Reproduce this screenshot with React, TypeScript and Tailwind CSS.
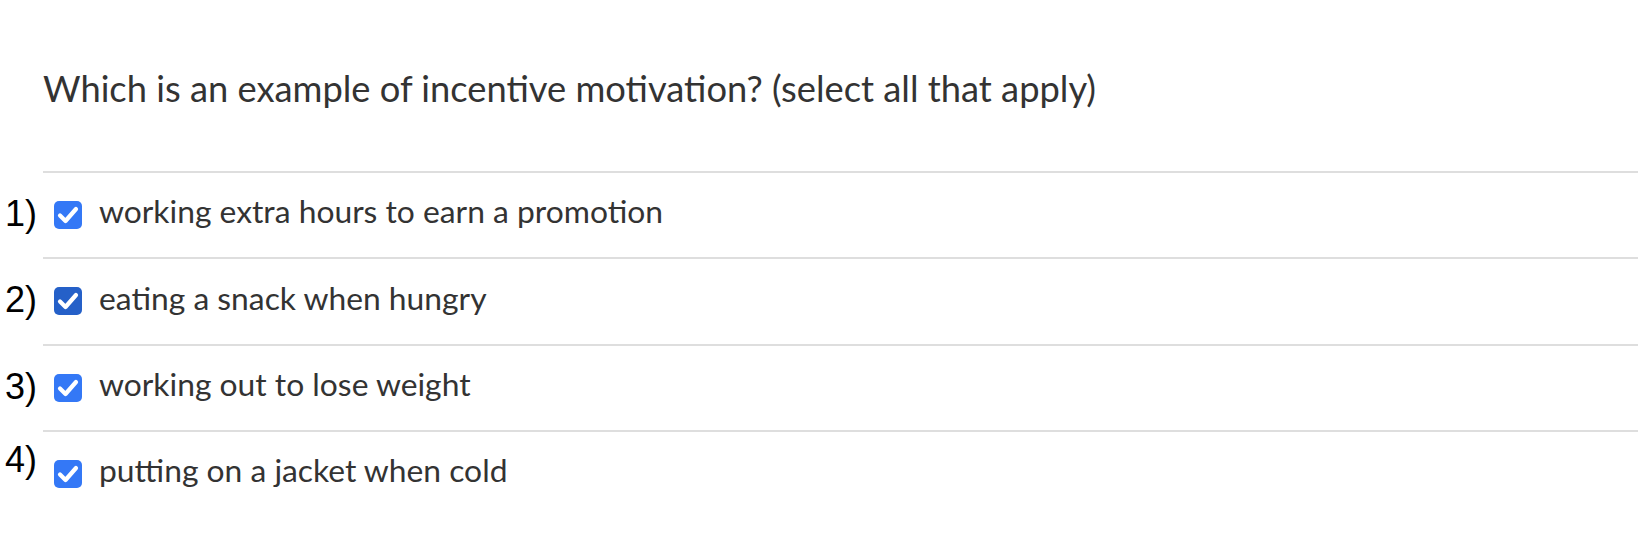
import React from "react";

const OPTIONS = [
  { n: "1)", label: "working extra hours to earn a promotion", box: "bg-[#3478f6]", numShift: "" },
  { n: "2)", label: "eating a snack when hungry", box: "bg-[#2560c8]", numShift: "" },
  { n: "3)", label: "working out to lose weight", box: "bg-[#3478f6]", numShift: "" },
  { n: "4)", label: "putting on a jacket when cold", box: "bg-[#3478f6]", numShift: "-translate-y-[13px]" },
];

function CheckBox({ color }: { color: string }) {
  return (
    <div className={`w-[28px] h-[28px] rounded-[5px] flex items-center justify-center shrink-0 ${color}`}>
      <svg width="28" height="28" viewBox="0 0 28 28" fill="none">
        <path
          d="M6 14.5 L11.5 20 L22 8"
          stroke="white"
          strokeWidth="4.2"
          strokeLinecap="round"
          strokeLinejoin="round"
        />
      </svg>
    </div>
  );
}

export default function App() {
  return (
    <div className="w-full h-[560px] bg-white overflow-hidden">
      <div className="pt-[63px]">
        <p className="pl-[43px] text-[36.3px] leading-[50px] text-[#333333] font-['Lato','Liberation_Sans',sans-serif]">
          Which is an example of incentive motivation? (select all that apply)
        </p>

        <div className="mt-[58px]">
          {OPTIONS.map((o) => (
            <div key={o.n} className="flex h-[86.3px]">
              {/* numero anotado do lado de fora da lista */}
              <div className="w-[43px] shrink-0 flex items-center pl-[5px]">
                <span className={`text-[36px] leading-none text-black font-['Liberation_Sans',Arial,sans-serif] ${o.numShift}`}>
                  {o.n}
                </span>
              </div>
              <div className="flex-1 border-t-2 border-[#dedede] flex items-center pl-[11px] gap-[17px]">
                <CheckBox color={o.box} />
                <span className="pb-[6px] text-[31.8px] text-[#333333] font-['Lato','Liberation_Sans',sans-serif]">
                  {o.label}
                </span>
              </div>
            </div>
          ))}
        </div>
      </div>
    </div>
  );
}
